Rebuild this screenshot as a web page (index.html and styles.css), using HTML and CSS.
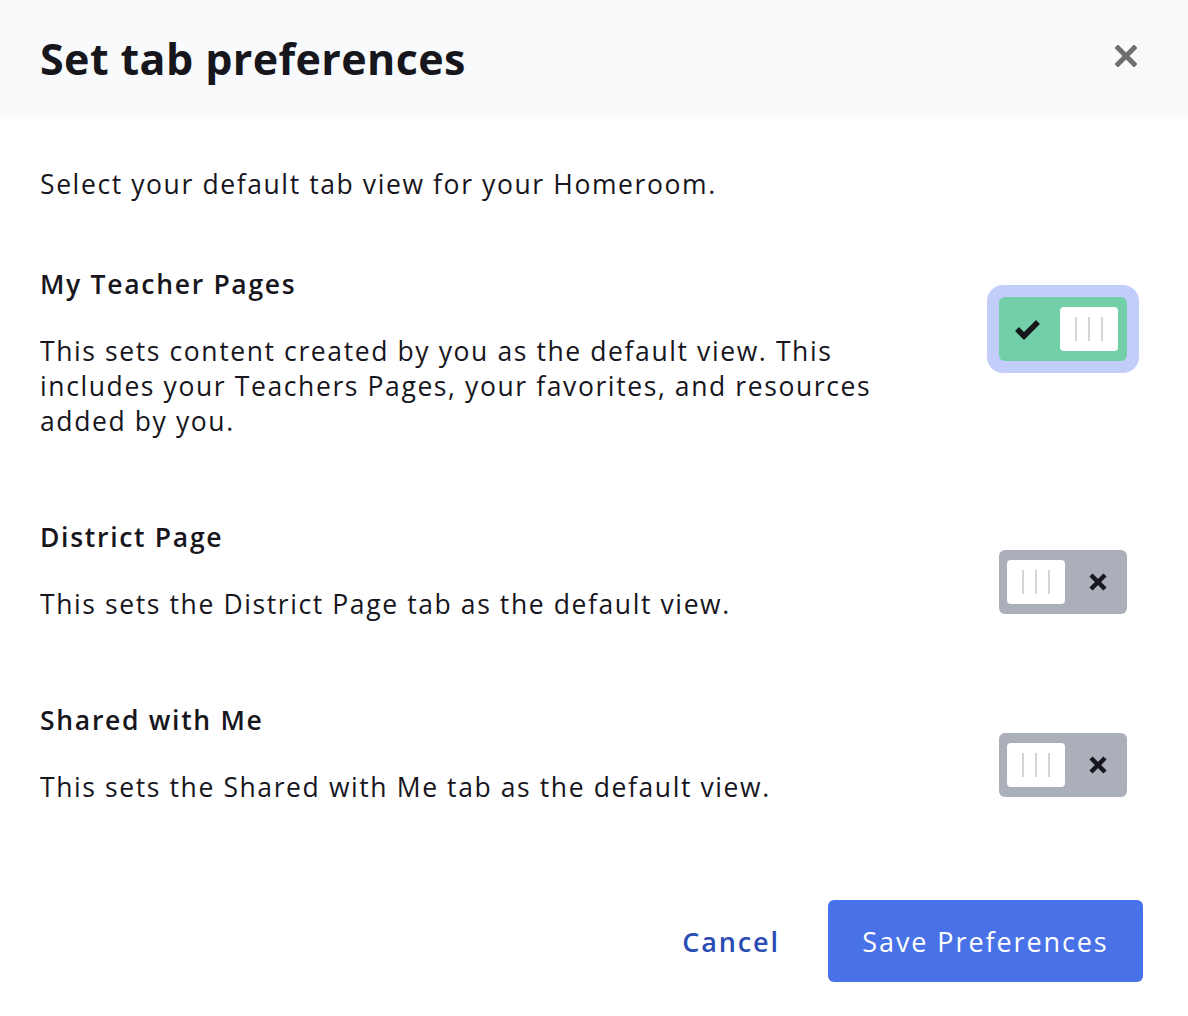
FILE: index.html
```html
<!DOCTYPE html>
<html lang="en">
<head>
<meta charset="utf-8">
<title>Set tab preferences</title>
<link rel="stylesheet" href="styles.css">
</head>
<body>
<div class="modal">
  <header class="modal-header">
    <h1 class="modal-title">Set tab preferences</h1>
    <button class="close-btn" aria-label="Close">
      <svg width="22" height="22" viewBox="0 0 22 22"><path d="M3 3 L19 19 M19 3 L3 19" stroke="#6f6f72" stroke-width="5" stroke-linecap="square"/></svg>
    </button>
  </header>
  <div class="modal-body">
    <p class="intro">Select your default tab view for your Homeroom.</p>

    <div class="option">
      <div class="option-text">
        <h2 class="option-title">My Teacher Pages</h2>
        <p class="option-desc">This sets content created by you as the default view. This includes your Teachers Pages, your favorites, and resources added by you.</p>
      </div>
      <div class="toggle-wrap focused">
        <div class="toggle on">
          <span class="toggle-icon">
            <svg width="28" height="24" viewBox="0 0 28 24"><path d="M3 12 L10 19 L24 5" fill="none" stroke="#17161d" stroke-width="5.5" stroke-linecap="butt"/></svg>
          </span>
          <span class="knob"><i></i><i></i><i></i></span>
        </div>
      </div>
    </div>

    <div class="option">
      <div class="option-text">
        <h2 class="option-title">District Page</h2>
        <p class="option-desc">This sets the District Page tab as the default view.</p>
      </div>
      <div class="toggle-wrap">
        <div class="toggle off">
          <span class="knob"><i></i><i></i><i></i></span>
          <span class="toggle-icon">
            <svg width="20" height="20" viewBox="0 0 20 20"><path d="M3 3 L17 17 M17 3 L3 17" stroke="#17161d" stroke-width="4.5"/></svg>
          </span>
        </div>
      </div>
    </div>

    <div class="option">
      <div class="option-text">
        <h2 class="option-title">Shared with Me</h2>
        <p class="option-desc">This sets the Shared with Me tab as the default view.</p>
      </div>
      <div class="toggle-wrap">
        <div class="toggle off">
          <span class="knob"><i></i><i></i><i></i></span>
          <span class="toggle-icon">
            <svg width="20" height="20" viewBox="0 0 20 20"><path d="M3 3 L17 17 M17 3 L3 17" stroke="#17161d" stroke-width="4.5"/></svg>
          </span>
        </div>
      </div>
    </div>

    <div class="actions">
      <button class="btn-link">Cancel</button>
      <button class="btn-primary">Save Preferences</button>
    </div>
  </div>
</div>
</body>
</html>
```

FILE: styles.css
```css
* { box-sizing: border-box; }
html, body { margin: 0; padding: 0; background: #ffffff; }
body {
  font-family: "Open Sans", "Lato", "Liberation Sans", sans-serif;
  color: #17161d;
}
.modal { width: 1188px; min-height: 1016px; background: #fff; }
.modal-header {
  height: 117px;
  background: #f9fafc;
  display: flex;
  align-items: center;
  justify-content: space-between;
  padding: 0 50px 0 40px;
}
.modal-title {
  margin: 0;
  font-size: 43px;
  font-weight: 700;
  letter-spacing: 0.4px;
  color: #17161d;
}
.close-btn {
  border: 0;
  background: none;
  padding: 0;
  width: 24px;
  height: 24px;
  display: flex;
  align-items: center;
  justify-content: center;
  margin-top: -6px;
}
.modal-body { padding: 50px 45px 0 40px; }
.intro {
  margin: 0 0 65px 0;
  font-size: 26.5px;
  line-height: 35px;
  letter-spacing: 1.6px;
}
.option {
  display: flex;
  justify-content: space-between;
  align-items: flex-start;
  margin-bottom: 81px;
}
.option-text { width: 910px; }
.option-title {
  margin: 0 0 32px 0;
  font-size: 26.5px;
  line-height: 35px;
  font-weight: 600;
  letter-spacing: 1.7px;
}
.option-desc {
  margin: 0;
  font-size: 26.5px;
  line-height: 35px;
  letter-spacing: 1.6px;
}
.toggle-wrap {
  margin-top: 18px;
  margin-bottom: -6px;
  padding: 12px;
  border-radius: 16px;
  margin-right: 4px;
}
.toggle-wrap.focused { background: #c3cdf9; }
.toggle {
  width: 128px;
  height: 64px;
  border-radius: 6px;
  display: flex;
  align-items: center;
  padding: 0 9px 0 8px;
}
.toggle.on { background: #72cfa7; justify-content: space-between; padding-left: 15px; }
.toggle.off { background: #abafba; justify-content: space-between; padding-right: 19px; }
.toggle-icon { display: flex; align-items: center; }
.knob {
  width: 58px;
  height: 44px;
  background: #fff;
  border-radius: 4px;
  display: flex;
  justify-content: center;
  align-items: center;
  gap: 11px;
}
.knob i {
  display: block;
  width: 2px;
  height: 24px;
  background: #d3d5da;
}
.actions {
  display: flex;
  justify-content: flex-end;
  align-items: center;
  gap: 48px;
  margin-top: 95px;
}
.btn-link {
  border: 0;
  background: none;
  font-family: inherit;
  font-size: 27px;
  font-weight: 600;
  letter-spacing: 1.9px;
  color: #2b4db3;
  padding: 0;
}
.btn-primary {
  border: 0;
  background: #4a72e8;
  color: #fff;
  font-family: inherit;
  font-size: 27px;
  font-weight: 400;
  letter-spacing: 1.9px;
  width: 315px;
  height: 82px;
  border-radius: 6px;
}
```
